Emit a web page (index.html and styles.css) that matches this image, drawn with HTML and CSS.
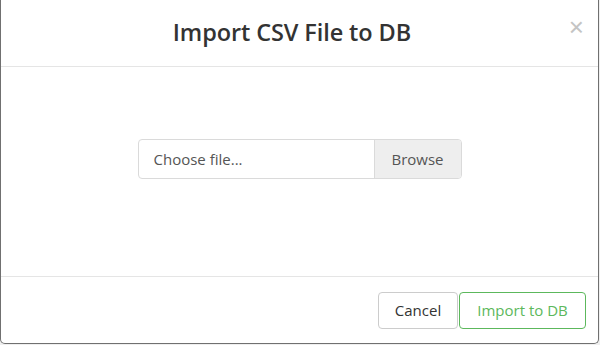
FILE: index.html
```html
<!DOCTYPE html>
<html lang="en">
<head>
<meta charset="utf-8">
<title>Import CSV File to DB</title>
<link rel="stylesheet" href="styles.css">
</head>
<body>
<div class="modal">
  <div class="modal-header">
    <h4 class="modal-title">Import CSV File to DB</h4>
    <button class="close" type="button" aria-label="Close">&times;</button>
  </div>
  <div class="modal-body">
    <label class="file-group">
      <span class="file-label">Choose file...</span>
      <span class="file-browse">Browse</span>
    </label>
  </div>
  <div class="modal-footer">
    <button class="btn btn-cancel" type="button">Cancel</button>
    <button class="btn btn-import" type="button">Import to DB</button>
  </div>
</div>
</body>
</html>
```

FILE: styles.css
```css
html, body {
  margin: 0;
  padding: 0;
  background: #efefef;
  font-family: "Open Sans", "Noto Sans", "Liberation Sans", sans-serif;
}
.modal {
  box-sizing: border-box;
  width: 599px;
  height: 344px;
  background: #fff;
  border: 1px solid #707070;
  border-top: none;
  border-radius: 0 0 5px 5px;
  display: flex;
  flex-direction: column;
}
.modal-header {
  box-sizing: border-box;
  height: 67px;
  border-bottom: 1px solid #e5e5e5;
  display: flex;
  align-items: center;
  padding: 0 14px 2px 14px;
}
.modal-title {
  flex: 1;
  margin: 0;
  text-align: center;
  font-size: 23.5px;
  font-weight: 600;
  color: #333;
  letter-spacing: -0.1px;
}
.close {
  align-self: flex-start;
  margin-top: 14px;
  background: none;
  border: none;
  padding: 0;
  font-family: "Liberation Sans", sans-serif;
  font-size: 26px;
  line-height: 26px;
  color: #c4c4c4;
  cursor: pointer;
}
.modal-body {
  flex: 1;
  display: flex;
  align-items: center;
  justify-content: center;
  padding-bottom: 26px;
}
.file-group {
  box-sizing: border-box;
  width: 324px;
  height: 40px;
  display: flex;
  border: 1px solid #dadada;
  border-radius: 4px;
  overflow: hidden;
  font-size: 15px;
  color: #555;
  cursor: pointer;
}
.file-label {
  flex: 1;
  display: flex;
  align-items: center;
  padding-left: 15px;
}
.file-browse {
  width: 87px;
  box-sizing: border-box;
  display: flex;
  align-items: center;
  justify-content: center;
  background: #eeeeee;
  border-left: 1px solid #dadada;
  color: #555;
}
.modal-footer {
  box-sizing: border-box;
  height: 67px;
  border-top: 1px solid #e5e5e5;
  display: flex;
  justify-content: flex-end;
  align-items: center;
  gap: 1px;
  padding: 0 12px 0 0;
}
.btn {
  box-sizing: border-box;
  height: 37px;
  background: #fff;
  border-radius: 4px;
  font-family: inherit;
  font-size: 15px;
  padding: 0 15px;
  cursor: pointer;
}
.btn-cancel {
  width: 80px;
  border: 1px solid #cccccc;
  color: #333;
}
.btn-import {
  width: 127px;
  border: 1px solid #5cb85c;
  color: #5cb85c;
}
```
